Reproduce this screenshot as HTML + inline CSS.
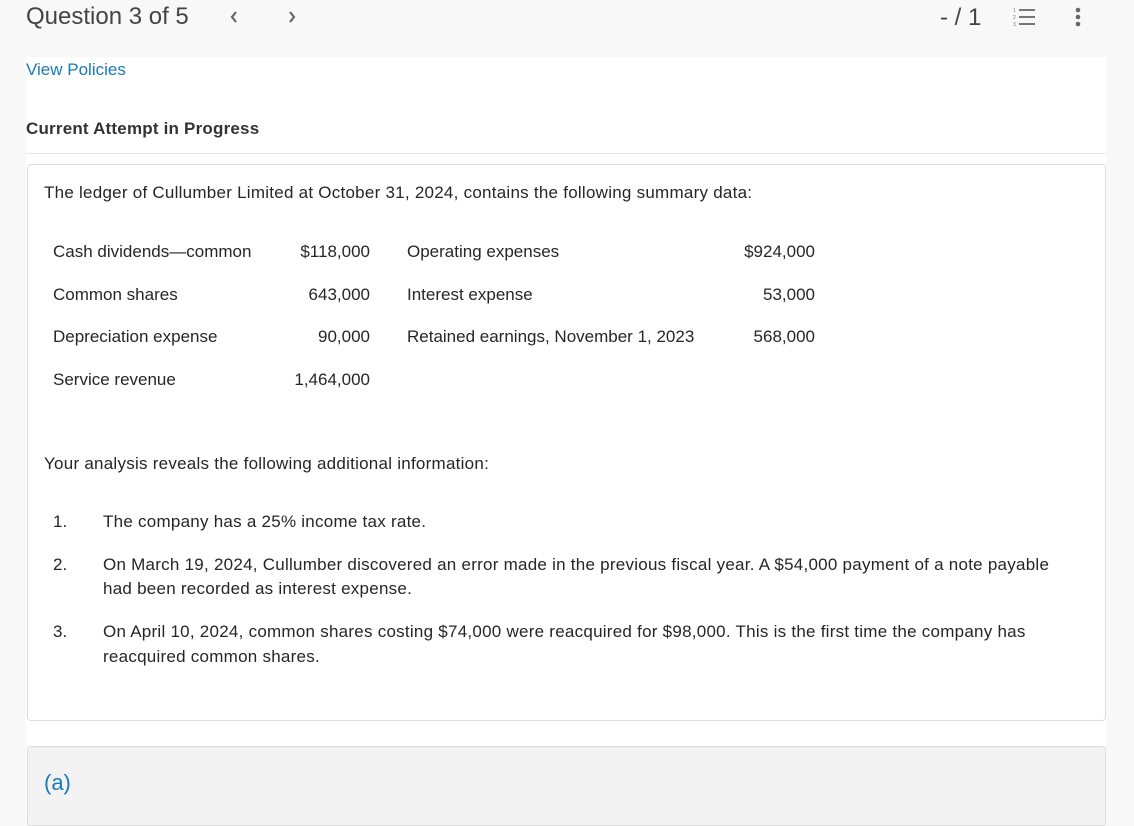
<!DOCTYPE html>
<html><head><style>
*{margin:0;padding:0;box-sizing:border-box}
body{width:1134px;height:814px;background:#f8f8f8;font-family:"Liberation Sans",sans-serif;color:#262626;position:relative;overflow:hidden}
.a{position:absolute;white-space:nowrap;font-size:17px;line-height:20px}
.p{letter-spacing:0.25px}
.r{text-align:right}
#main{position:absolute;left:26px;top:57px;width:1080px;height:760px;background:#fff}
.box{position:absolute;left:27px;top:164px;width:1079px;height:557px;border:1px solid #dcdcdc;border-radius:4px;background:#fff}
.box2{position:absolute;left:27px;top:746px;width:1079px;height:80px;border:1px solid #dcdcdc;border-radius:3px;background:#f3f3f3}
</style></head><body>
<div class="a" style="left:26px;top:3px;font-size:24px;line-height:28px;color:#444">Question 3 of 5</div>
<svg style="position:absolute;left:229px;top:10px" width="10" height="14"><path d="M7 2 L3 7 L7 12" stroke="#666" stroke-width="2.2" fill="none"/></svg>
<svg style="position:absolute;left:287px;top:10px" width="10" height="14"><path d="M3 2 L7 7 L3 12" stroke="#666" stroke-width="2.2" fill="none"/></svg>
<div class="a" style="left:940px;top:4px;font-size:24px;line-height:28px;color:#444">- / 1</div>
<svg style="position:absolute;left:1011px;top:6px" width="26" height="22"><g fill="#777" font-size="5" font-family="Liberation Sans"><text x="2" y="6">1</text><text x="2" y="13">2</text><text x="2" y="20">3</text></g><g stroke="#777" stroke-width="2"><line x1="8" y1="4" x2="24" y2="4"/><line x1="8" y1="11" x2="24" y2="11"/><line x1="8" y1="18" x2="24" y2="18"/></g></svg>
<svg style="position:absolute;left:1074px;top:6px" width="8" height="22"><circle cx="4" cy="4" r="2.3" fill="#666"/><circle cx="4" cy="11" r="2.3" fill="#666"/><circle cx="4" cy="18" r="2.3" fill="#666"/></svg>
<div id="main"></div>
<div style="position:absolute;left:26px;top:153px;width:1080px;height:1px;background:#e8e8e8"></div>
<div class="a" style="left:26px;top:60px;color:#1a7ab5">View Policies</div>
<div class="a" style="left:26px;top:119px;font-weight:bold;color:#333;letter-spacing:0.2px">Current Attempt in Progress</div>
<div class="box"></div>
<div class="a p" style="left:44px;top:183px">The ledger of Cullumber Limited at October 31, 2024, contains the following summary data:</div>
<div class="a" style="left:53px;top:242px">Cash dividends—common</div>
<div class="a r" style="left:250px;width:120px;top:242px">$118,000</div>
<div class="a" style="left:407px;top:242px">Operating expenses</div>
<div class="a r" style="left:695px;width:120px;top:242px">$924,000</div>
<div class="a" style="left:53px;top:285px">Common shares</div>
<div class="a r" style="left:250px;width:120px;top:285px">643,000</div>
<div class="a" style="left:407px;top:285px">Interest expense</div>
<div class="a r" style="left:695px;width:120px;top:285px">53,000</div>
<div class="a" style="left:53px;top:327px">Depreciation expense</div>
<div class="a r" style="left:250px;width:120px;top:327px">90,000</div>
<div class="a" style="left:407px;top:327px">Retained earnings, November 1, 2023</div>
<div class="a r" style="left:695px;width:120px;top:327px">568,000</div>
<div class="a" style="left:53px;top:370px">Service revenue</div>
<div class="a r" style="left:250px;width:120px;top:370px">1,464,000</div>
<div class="a p" style="left:44px;top:454px">Your analysis reveals the following additional information:</div>
<div class="a" style="left:53px;top:512px">1.</div>
<div class="a p" style="left:103px;top:512px">The company has a 25% income tax rate.</div>
<div class="a" style="left:53px;top:555px">2.</div>
<div class="a p" style="left:103px;top:555px">On March 19, 2024, Cullumber discovered an error made in the previous fiscal year. A $54,000 payment of a note payable</div>
<div class="a p" style="left:103px;top:579px">had been recorded as interest expense.</div>
<div class="a" style="left:53px;top:622px">3.</div>
<div class="a p" style="left:103px;top:622px">On April 10, 2024, common shares costing $74,000 were reacquired for $98,000. This is the first time the company has</div>
<div class="a p" style="left:103px;top:647px">reacquired common shares.</div>
<div class="box2"></div>
<div class="a" style="left:44px;top:770px;font-size:22px;line-height:26px;color:#1a7ab5">(a)</div>
</body></html>
